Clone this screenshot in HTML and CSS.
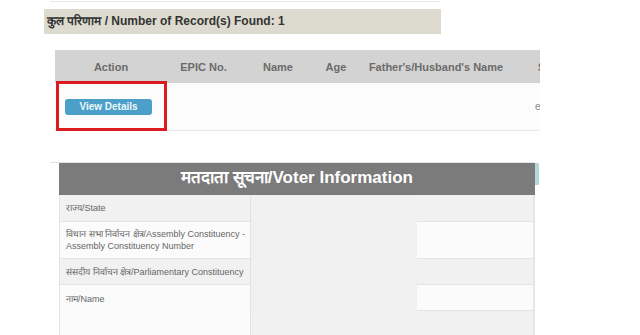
FILE: index.html
```html
<!DOCTYPE html>
<html lang="hi">
<head>
  <meta charset="UTF-8">
  <title>मतदाता सूचना</title>
  <link rel="stylesheet" href="styles.css">
</head>
<body>
  <div class="top-box"></div>

  <div class="records">कुल परिणाम / Number of Record(s) Found: 1</div>

  <div class="results">
    <table>
      <colgroup>
        <col style="width: 112px">
        <col style="width: 73px">
        <col style="width: 76px">
        <col style="width: 40px">
        <col style="width: 160px">
        <col style="width: 24px">
      </colgroup>
      <thead>
        <tr>
          <th>Action</th>
          <th>EPIC No.</th>
          <th>Name</th>
          <th>Age</th>
          <th>Father's/Husband's Name</th>
          <th class="clip">Status</th>
        </tr>
      </thead>
      <tbody>
        <tr>
          <td class="action">
            <button class="view-btn">View Details</button>
            <span class="highlight"></span>
          </td>
          <td></td>
          <td></td>
          <td></td>
          <td></td>
          <td class="clip">e</td>
        </tr>
      </tbody>
    </table>
  </div>

  <div class="voter-wrap">
    <div class="voter">
      <div class="voter-title">मतदाता सूचना/Voter Information</div>
      <span class="tab-hint"></span>
      <div class="voter-body">
        <div class="labels">
          <div class="cell shade h27">राज्य/State</div>
          <div class="cell h37">विधान सभा निर्वाचन क्षेत्र/Assembly Constituency - Assembly Constituency Number</div>
          <div class="cell shade h26">संसदीय निर्वाचन क्षेत्र/Parliamentary Constituency</div>
          <div class="cell tall">नाम/Name</div>
        </div>
        <div class="values">
          <div class="cell shade h27"></div>
          <div class="cell h37"></div>
          <div class="cell shade h26"></div>
          <div class="cell h26"></div>
          <div class="cell shade h26"></div>
          <span class="masked"></span>
        </div>
      </div>
    </div>
  </div>
</body>
</html>
```
FILE: styles.css
```css
body {
  margin: 0;
  background-color: white;
  font-family: "Liberation Sans", Arial, sans-serif;
  overflow: hidden;
}
.top-box {
  width: 390px;
  margin-left: 50px;
  padding-top: 1px;
  border-bottom: 1px solid #e6e6e6;
}
.records {
  width: 394px;
  height: 25px;
  margin: 7px 0 0 44px;
  padding-left: 3px;
  background-color: #dddbcf;
  color: #333;
  font-size: 12px;
  font-weight: bold;
  line-height: 25px;
}
.results {
  width: 485px;
  margin: 16px 0 0 55px;
  overflow: hidden;
}
table {
  width: 485px;
  border-collapse: collapse;
  table-layout: fixed;
}
th {
  height: 33px;
  padding: 0;
  background-color: #d3d3d3;
  color: #6b6b6b;
  font-size: 11px;
  font-weight: bold;
  text-align: center;
  white-space: nowrap;
}
td {
  height: 47px;
  padding: 0;
  background-color: #fcfcfc;
  border-bottom: 1px solid #e8e8e8;
  color: #888;
  font-size: 10px;
}
th.clip, td.clip {
  text-align: left;
  overflow: hidden;
}
th.clip {
  padding-left: 22px;
}
td.clip {
  padding-left: 19px;
}
.action {
  position: relative;
}
.view-btn {
  display: block;
  width: 87px;
  height: 16px;
  margin-left: 10px;
  padding: 0;
  background-color: #4b9fc9;
  color: #eef7fb;
  border: none;
  border-radius: 3px;
  font-family: "Liberation Sans", Arial, sans-serif;
  font-size: 10px;
  font-weight: bold;
}
.highlight {
  position: absolute;
  left: 1px;
  top: -2px;
  width: 105px;
  height: 44px;
  border: 3px solid #dc1b1e;
}
.voter-wrap {
  width: 485px;
  margin: 31px 0 0 50px;
  border-top: 1px solid #e4e4e4;
}
.voter {
  position: relative;
  width: 476px;
  margin-left: 9px;
}
.voter-title {
  height: 32px;
  background-color: #7b7b7b;
  color: white;
  font-size: 17px;
  font-weight: bold;
  line-height: 30px;
  text-align: center;
}
.tab-hint {
  position: absolute;
  right: -4px;
  top: 0;
  width: 4px;
  height: 22px;
  background-color: #b5d8d8;
}
.voter-body {
  display: flex;
  border-left: 1px solid #e2e2e2;
  border-right: 2px solid #e6e6e6;
}
.labels {
  width: 190px;
  border-right: 1px solid #e2e2e2;
}
.values {
  position: relative;
  flex: 1;
}
.cell {
  box-sizing: border-box;
  padding: 0 0 0 6px;
  background-color: #fbfbfb;
  border-bottom: 1px solid #e4e4e4;
  color: #666;
  font-size: 9px;
  line-height: 12px;
  display: flex;
  align-items: center;
}
.cell.shade {
  background-color: #f1f1f1;
}
.h27 { height: 27px; }
.h37 { height: 37px; }
.h26 { height: 26px; }
.labels .tall {
  height: 60px;
  align-items: flex-start;
  padding-top: 8px;
}
.masked {
  position: absolute;
  left: 0;
  top: 0;
  width: 166px;
  height: 119px;
  background-color: #f0f0f0;
}
```
